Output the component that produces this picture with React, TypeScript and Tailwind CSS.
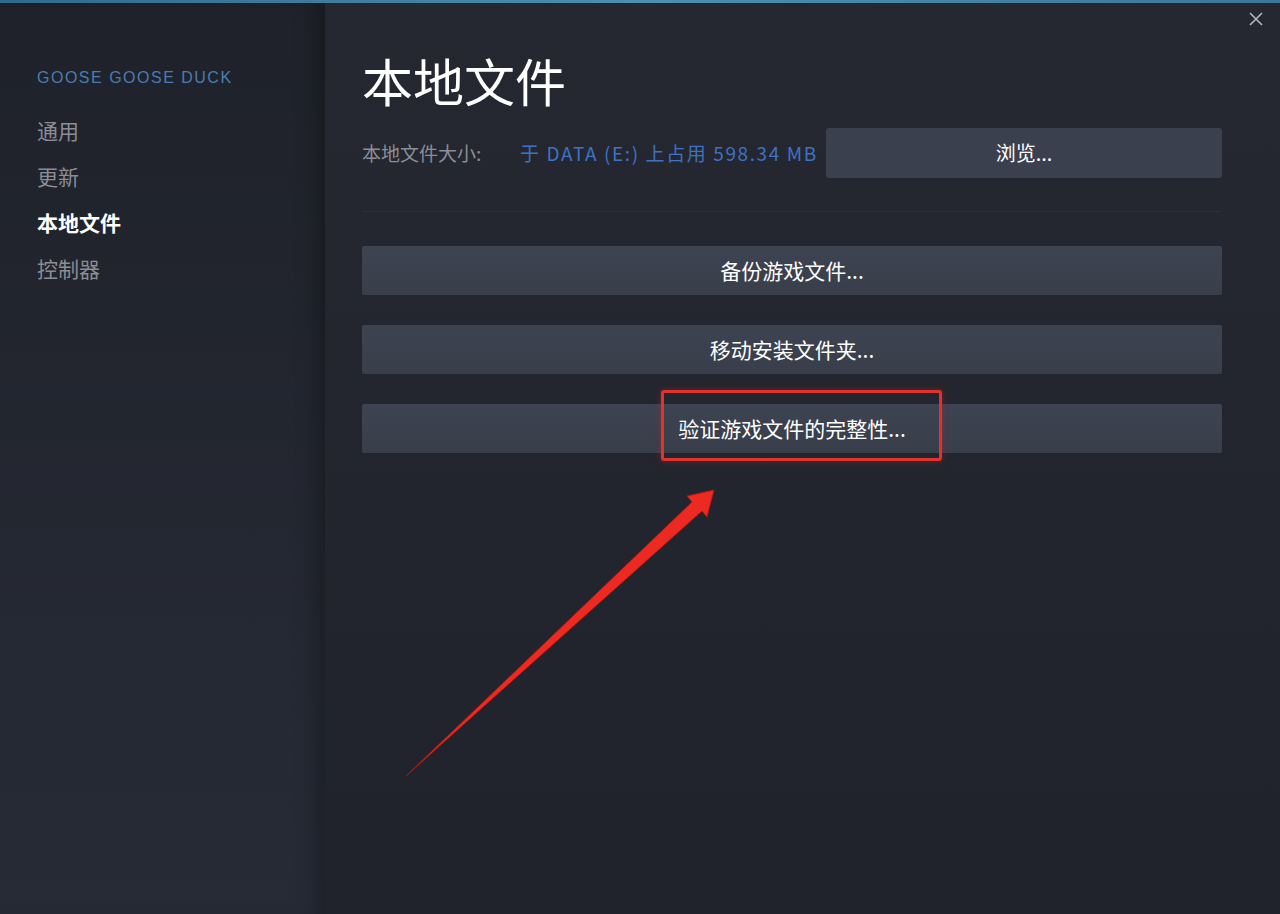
import React from "react";

const navItems = [
  { label: "通用", active: false },
  { label: "更新", active: false },
  { label: "本地文件", active: true },
  { label: "控制器", active: false },
];

const actions = ["备份游戏文件...", "移动安装文件夹...", "验证游戏文件的完整性..."];

const font = "font-['Noto_Sans_CJK_SC','Noto_Sans',sans-serif]";

const App = () => {
  return (
    <div className={`relative w-full h-[914px] flex flex-col overflow-hidden bg-[#22252d] ${font}`}>
      <div className="h-[3px] w-full bg-gradient-to-r from-[#2f6a8a] via-[#4d8fb0] to-[#3b7898]" />

      <div className="flex flex-row flex-1">
        {/* sidebar */}
        <div className="w-[325px] flex flex-col bg-gradient-to-b from-[#1f222a] to-[#272b36] pl-[37px] pt-[67px] shadow-[inset_-18px_0_24px_-14px_rgba(0,0,0,0.35)]">
          <div className="font-['Liberation_Sans',sans-serif] text-[16px] tracking-[1.5px] text-[#4a7cb2] leading-none">
            GOOSE GOOSE DUCK
          </div>
          <div className="flex flex-col mt-[30px] gap-[18px]">
            {navItems.map((item) => (
              <div
                key={item.label}
                className={
                  item.active
                    ? "text-[21px] leading-[28px] font-bold text-white"
                    : "text-[21px] leading-[28px] text-[#8a8d95]"
                }
              >
                {item.label}
              </div>
            ))}
          </div>
        </div>

        {/* main */}
        <div className="relative flex-1 flex flex-col pl-[37px] pr-[58px] bg-gradient-to-b from-[#252831] to-[#20232b]">
          <button className="absolute right-[16px] top-[8px] text-[#b4b7bd]">
            <svg width="16" height="16" viewBox="0 0 16 16" fill="none" stroke="currentColor" strokeWidth="1.6">
              <path d="M2 2 L14 14 M14 2 L2 14" />
            </svg>
          </button>

          <h1 className="mt-[47px] text-[51px] leading-[60px] font-normal text-white">本地文件</h1>

          <div className="mt-[18px] flex flex-row items-center h-[50px]">
            <div className="text-[19px] text-[#8b8e96] w-[158px]">本地文件大小:</div>
            <div className="text-[19px] text-[#3d72c4] tracking-[1.6px] w-[306px] whitespace-nowrap">
              于 DATA (E:) 上占用 598.34 MB
            </div>
            <button className="flex-1 h-[50px] rounded-[3px] bg-[#3b404e] text-white text-[20px] font-normal">
              浏览...
            </button>
          </div>

          <div className="mt-[33px] h-px bg-[#2c303a]" />

          <div className="mt-[34px] flex flex-col gap-[30px]">
            {actions.map((a) => (
              <button
                key={a}
                className="h-[49px] rounded-[2px] bg-gradient-to-b from-[#3e4351] to-[#393e4b] text-white text-[21px] font-normal"
              >
                {a}
              </button>
            ))}
          </div>
        </div>
      </div>

      {/* annotation: red box */}
      <div className="absolute left-[661px] top-[390px] w-[281px] h-[71px] border-[3px] border-[#e1322d] rounded-[3px] shadow-[0_0_6px_rgba(200,30,30,0.45)]" />

      {/* annotation: arrow */}
      <svg className="absolute left-0 top-0 pointer-events-none" width="1280" height="914" viewBox="0 0 1280 914">
        <polygon
          points="406,776 692,502 687,496 714,490 707,517 702,511"
          fill="#ec2a22"
          stroke="#b8160f"
          strokeWidth="0.8"
          strokeLinejoin="round"
        />
      </svg>
    </div>
  );
};

export default App;
